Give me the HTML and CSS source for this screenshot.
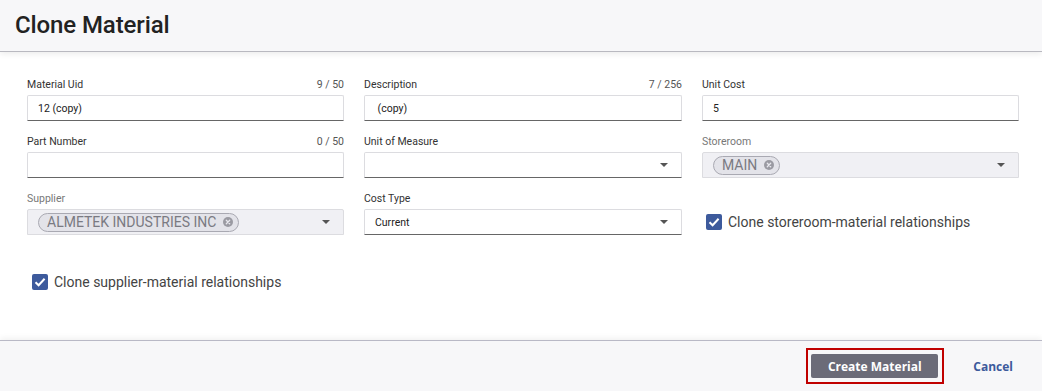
FILE: index.html
```html
<!DOCTYPE html>
<html lang="en">
<head>
  <meta charset="UTF-8">
  <title>Clone Material</title>
  <link rel="stylesheet" href="styles.css">
</head>
<body>
  <div class="dialog">
    <div class="dialog-header">
      <h1>Clone Material</h1>
    </div>

    <div class="dialog-body">
      <div class="form-grid">
        <div class="field">
          <div class="field-label"><span>Material Uid</span><span class="counter">9 / 50</span></div>
          <div class="input">12 (copy)</div>
        </div>
        <div class="field">
          <div class="field-label"><span>Description</span><span class="counter">7 / 256</span></div>
          <div class="input">&nbsp;(copy)</div>
        </div>
        <div class="field">
          <div class="field-label"><span>Unit Cost</span></div>
          <div class="input">5</div>
        </div>

        <div class="field">
          <div class="field-label"><span>Part Number</span><span class="counter">0 / 50</span></div>
          <div class="input"></div>
        </div>
        <div class="field">
          <div class="field-label"><span>Unit of Measure</span></div>
          <div class="input select"><span></span><span class="caret"></span></div>
        </div>
        <div class="field disabled">
          <div class="field-label"><span>Storeroom</span></div>
          <div class="input select">
            <span class="chip">MAIN <span class="chip-x"><svg width="10" height="10" viewBox="0 0 10 10"><circle cx="5" cy="5" r="5" fill="#9a9aa2"/><path d="M3.3 3.3 L6.7 6.7 M6.7 3.3 L3.3 6.7" stroke="#e8e8ee" stroke-width="1.3" stroke-linecap="round"/></svg></span></span>
            <span class="caret"></span>
          </div>
        </div>

        <div class="field disabled">
          <div class="field-label"><span>Supplier</span></div>
          <div class="input select">
            <span class="chip">ALMETEK INDUSTRIES INC <span class="chip-x"><svg width="10" height="10" viewBox="0 0 10 10"><circle cx="5" cy="5" r="5" fill="#9a9aa2"/><path d="M3.3 3.3 L6.7 6.7 M6.7 3.3 L3.3 6.7" stroke="#e8e8ee" stroke-width="1.3" stroke-linecap="round"/></svg></span></span>
            <span class="caret"></span>
          </div>
        </div>
        <div class="field">
          <div class="field-label"><span>Cost Type</span></div>
          <div class="input select"><span>Current</span><span class="caret"></span></div>
        </div>
        <div class="field">
          <div class="field-label"></div>
          <label class="check">
            <span class="box"><svg width="16" height="16" viewBox="0 0 16 16"><path d="M3.5 8.3 L6.6 11.3 L12.6 4.8" fill="none" stroke="#fff" stroke-width="2"/></svg></span>
            Clone storeroom-material relationships
          </label>
        </div>
      </div>

      <label class="check supplier-check">
        <span class="box"><svg width="16" height="16" viewBox="0 0 16 16"><path d="M3.5 8.3 L6.6 11.3 L12.6 4.8" fill="none" stroke="#fff" stroke-width="2"/></svg></span>
        Clone supplier-material relationships
      </label>
    </div>

    <div class="dialog-footer">
      <div class="focus-ring"><button class="btn-primary">Create Material</button></div>
      <button class="btn-link">Cancel</button>
    </div>
  </div>
</body>
</html>
```

FILE: styles.css
```css
html, body {
  margin: 0;
  padding: 0;
  background: #fff;
  font-family: Roboto, "Liberation Sans", sans-serif;
  color: #333;
}
.dialog {
  width: 1042px;
  height: 391px;
  display: flex;
  flex-direction: column;
  overflow: hidden;
}
.dialog-header {
  height: 51px;
  background: #f7f7f9;
  border-bottom: 1px solid #b9b9c0;
  box-shadow: 0 2px 6px rgba(0,0,0,0.08);
  display: flex;
  align-items: center;
  padding-left: 15px;
  flex-shrink: 0;
  position: relative;
  z-index: 1;
}
.dialog-header h1 {
  margin: 0;
  font-size: 24px;
  font-weight: 500;
  color: #222;
  letter-spacing: -0.1px;
  padding-bottom: 2px;
}
.dialog-body {
  flex: 1;
  padding: 24px 23px 0 27px;
}
.form-grid {
  display: grid;
  grid-template-columns: 317px 318px 317px;
  column-gap: 20px;
  row-gap: 12px;
}
.field-label {
  height: 16px;
  margin-bottom: 3px;
  display: flex;
  justify-content: space-between;
  align-items: center;
  font-size: 10.5px;
  color: #333;
}
.counter {
  color: #555;
}
.field.disabled .field-label {
  color: #777;
}
.input {
  height: 26px;
  box-sizing: border-box;
  border: 1px solid #dcdce0;
  border-bottom: 1px solid #666;
  border-radius: 2px 2px 0 0;
  background: #fff;
  padding: 0 10px;
  display: flex;
  align-items: center;
  font-size: 10.5px;
  color: #222;
}
.select {
  justify-content: space-between;
  padding-right: 13px;
}
.caret {
  width: 0;
  height: 0;
  border-left: 4px solid transparent;
  border-right: 4px solid transparent;
  border-top: 4px solid #555;
}
.field.disabled .input {
  background: #f0f0f4;
  border-bottom-color: #dcdce0;
  padding-left: 10px;
}
.chip {
  display: inline-flex;
  align-items: center;
  height: 17px;
  padding: 0 5px 0 8px;
  border: 1px solid #a9a9b2;
  border-radius: 10px;
  background: #e3e3e9;
  color: #7a7a82;
  font-size: 14px;
  gap: 7px;
}
.chip-x {
  display: inline-flex;
}
.check {
  display: flex;
  align-items: center;
  gap: 6px;
  font-size: 14px;
  color: #444;
  height: 26px;
  padding-left: 4px;
}
.box {
  width: 16px;
  height: 16px;
  border-radius: 2px;
  background: #3d5a9c;
  display: inline-flex;
}
.supplier-check {
  margin-top: 34px;
  padding-left: 5px;
}
.dialog-footer {
  height: 50px;
  flex-shrink: 0;
  background: #f7f7f9;
  border-top: 1px solid #b9b9c6;
  box-shadow: 0 -2px 6px rgba(0,0,0,0.06);
  display: flex;
  align-items: center;
  justify-content: flex-end;
  padding-right: 17px;
}
.focus-ring {
  border: 2px solid #c00000;
  padding: 4px 4px 4px 3px;
  margin-right: 17px;
  display: flex;
}
.btn-primary {
  width: 127px;
  height: 24px;
  border: none;
  border-radius: 2px;
  background: #6b6b78;
  color: #fff;
  font-family: "Open Sans", Roboto, sans-serif;
  font-weight: 700;
  font-size: 12px;
  padding: 0;
}
.btn-link {
  border: none;
  background: none;
  padding: 0 12px;
  color: #3d5a9c;
  font-family: "Open Sans", Roboto, sans-serif;
  font-weight: 700;
  font-size: 12px;
}
```
